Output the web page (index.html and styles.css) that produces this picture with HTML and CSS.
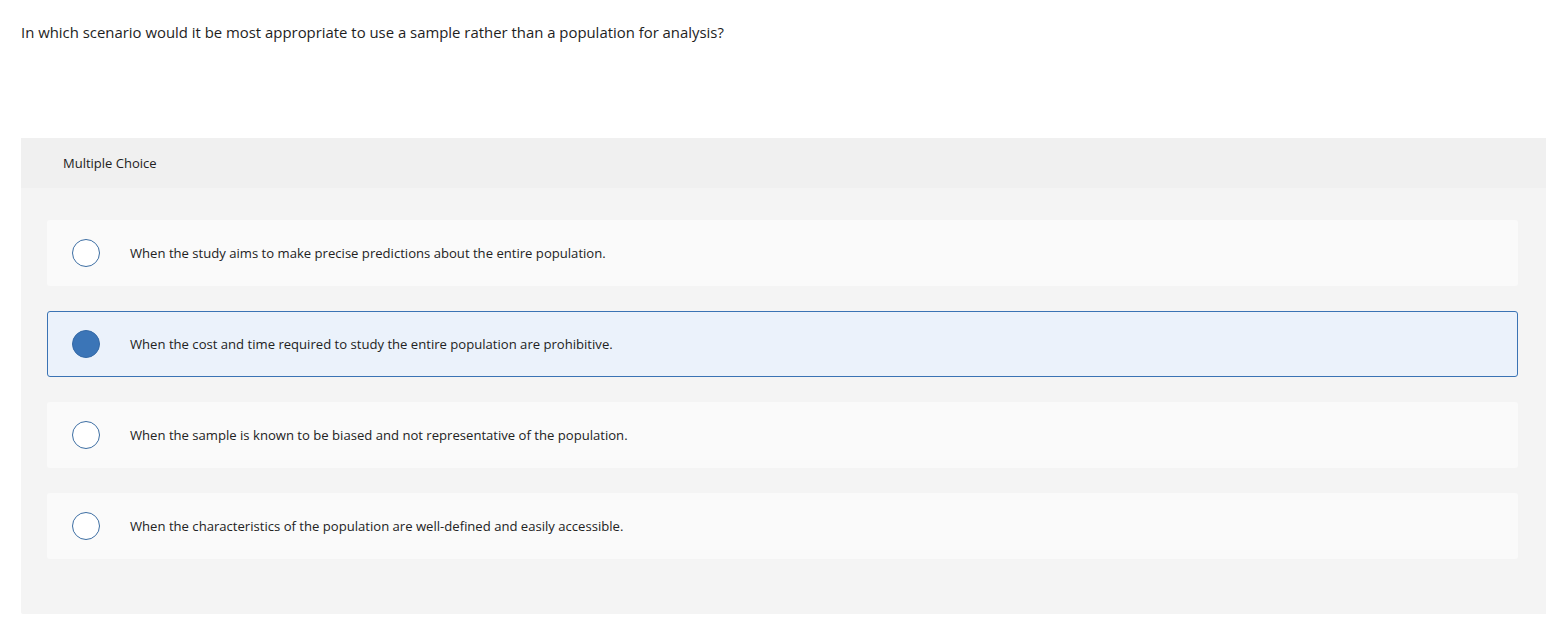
FILE: index.html
```html
<!DOCTYPE html>
<html lang="en">
<head>
    <meta charset="UTF-8">
    <meta name="viewport" content="width=device-width, initial-scale=1.0">
    <title>Question</title>
    <link rel="stylesheet" href="styles.css">
</head>
<body>

    <div class="question">
        <p class="prompt">In which scenario would it be most appropriate to use a sample rather than a population for analysis?</p>

        <div class="choices">
            <div class="choices-header">Multiple Choice</div>
            <ul class="choices-list">
                <li class="choice"><span class="radio"></span><span class="choice-text">When the study aims to make precise predictions about the entire population.</span></li>
                <li class="choice selected"><span class="radio"></span><span class="choice-text">When the cost and time required to study the entire population are prohibitive.</span></li>
                <li class="choice"><span class="radio"></span><span class="choice-text">When the sample is known to be biased and not representative of the population.</span></li>
                <li class="choice"><span class="radio"></span><span class="choice-text">When the characteristics of the population are well-defined and easily accessible.</span></li>
            </ul>
        </div>
    </div>

</body>
</html>
```

FILE: styles.css
```css
html,
body {
  margin: 0;
  padding: 0;
  background: #fff;
}

body {
  font-family: "Open Sans", Arial, sans-serif;
  color: #222;
  overflow: hidden;
}

.question {
  padding: 22px 0 0 21px;
}

.prompt {
  margin: 0;
  font-size: 14.9px;
  line-height: 20px;
  color: #1e1e1e;
}

.choices {
  margin-top: 96px;
  background: #f4f4f4;
  border-radius: 2px 0 0 2px;
}

.choices-header {
  height: 50px;
  line-height: 50px;
  padding-left: 42px;
  font-size: 13px;
  background: #f0f0f0;
  color: #222;
}

.choices-list {
  list-style: none;
  margin: 0;
  padding: 32px 28px 55px 26px;
  display: flex;
  flex-direction: column;
  gap: 25px;
}

.choice {
  display: flex;
  align-items: center;
  height: 66px;
  padding-left: 24px;
  background: #fafafa;
  border: 1px solid transparent;
  border-radius: 3px;
  box-sizing: border-box;
}

.choice.selected {
  background: #ebf2fb;
  border-color: #3a73b4;
}

.radio {
  width: 28px;
  height: 28px;
  box-sizing: border-box;
  border: 1.5px solid #3d6ea3;
  border-radius: 50%;
  background: #fff;
  flex: none;
}

.selected .radio {
  background: #3b75b7;
  border-color: #3469a6;
}

.choice-text {
  margin-left: 30px;
  font-size: 13.1px;
  color: #222;
}
```
